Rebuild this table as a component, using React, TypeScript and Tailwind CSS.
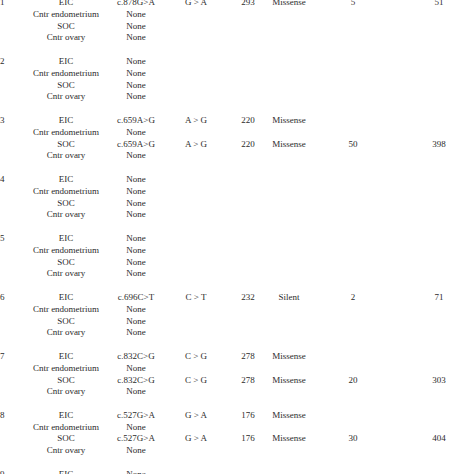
import React from "react";

type Row = {
  sample: string;
  mutation?: string;
  base?: string;
  codon?: string;
  effect?: string;
  a?: string;
  b?: string;
};

type Group = { id: string; rows: Row[] };

const none = (sample: string): Row => ({ sample, mutation: "None" });

const groups: Group[] = [
  {
    id: "1",
    rows: [
      { sample: "EIC", mutation: "c.878G>A", base: "G > A", codon: "293", effect: "Missense", a: "5", b: "51" },
      none("Cntr endometrium"),
      none("SOC"),
      none("Cntr ovary"),
    ],
  },
  { id: "2", rows: [none("EIC"), none("Cntr endometrium"), none("SOC"), none("Cntr ovary")] },
  {
    id: "3",
    rows: [
      { sample: "EIC", mutation: "c.659A>G", base: "A > G", codon: "220", effect: "Missense" },
      none("Cntr endometrium"),
      { sample: "SOC", mutation: "c.659A>G", base: "A > G", codon: "220", effect: "Missense", a: "50", b: "398" },
      none("Cntr ovary"),
    ],
  },
  { id: "4", rows: [none("EIC"), none("Cntr endometrium"), none("SOC"), none("Cntr ovary")] },
  { id: "5", rows: [none("EIC"), none("Cntr endometrium"), none("SOC"), none("Cntr ovary")] },
  {
    id: "6",
    rows: [
      { sample: "EIC", mutation: "c.696C>T", base: "C > T", codon: "232", effect: "Silent", a: "2", b: "71" },
      none("Cntr endometrium"),
      none("SOC"),
      none("Cntr ovary"),
    ],
  },
  {
    id: "7",
    rows: [
      { sample: "EIC", mutation: "c.832C>G", base: "C > G", codon: "278", effect: "Missense" },
      none("Cntr endometrium"),
      { sample: "SOC", mutation: "c.832C>G", base: "C > G", codon: "278", effect: "Missense", a: "20", b: "303" },
      none("Cntr ovary"),
    ],
  },
  {
    id: "8",
    rows: [
      { sample: "EIC", mutation: "c.527G>A", base: "G > A", codon: "176", effect: "Missense" },
      none("Cntr endometrium"),
      { sample: "SOC", mutation: "c.527G>A", base: "G > A", codon: "176", effect: "Missense", a: "30", b: "404" },
      none("Cntr ovary"),
    ],
  },
  { id: "9", rows: [none("EIC"), none("Cntr endometrium")] },
];

const App: React.FC = () => {
  return (
    <div
      className="w-[474px] h-[474px] overflow-hidden bg-white text-[9px] text-[#2b2b2b]"
      style={{ fontFamily: '"Liberation Serif", "Times New Roman", serif' }}
    >
      <div className="-mt-[3px] flex flex-col">
        {groups.map((g) => (
          <div key={g.id} className="flex flex-col pb-[11.8px]">
            {g.rows.map((r, i) => (
              <div
                key={i}
                className="grid h-[11.8px] grid-cols-[26px_80px_60px_60px_44px_38px_90px_82px] items-center leading-[11.8px] whitespace-nowrap"
              >
                <span className="text-left">{i === 0 ? g.id : ""}</span>
                <span className="text-center">{r.sample}</span>
                <span className="text-center">{r.mutation}</span>
                <span className="text-center">{r.base}</span>
                <span className="text-center">{r.codon}</span>
                <span className="text-center">{r.effect}</span>
                <span className="text-center">{r.a}</span>
                <span className="text-center">{r.b}</span>
              </div>
            ))}
          </div>
        ))}
      </div>
    </div>
  );
};

export default App;
